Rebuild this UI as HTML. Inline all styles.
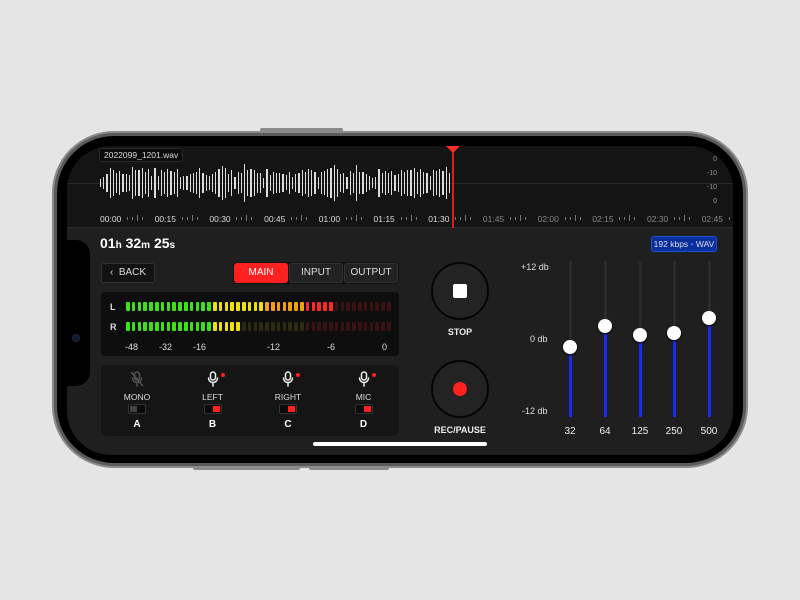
<!DOCTYPE html>
<html><head><meta charset="utf-8">
<style>
*{margin:0;padding:0;box-sizing:border-box}
body{width:800px;height:600px;background:#e5e5e5;position:relative;overflow:hidden;font-family:"Liberation Sans",sans-serif;color:#fff}
.abs{position:absolute}
.frame{left:52px;top:131px;width:696px;height:337px;border-radius:62px;background:#5a5a5a;border:2px solid #8a8a8a}
.bezel{left:57px;top:136px;width:686px;height:327px;border-radius:57px;background:#000}
.screen{left:67px;top:146px;width:666px;height:309px;border-radius:44px;background:#1f1f1f;overflow:hidden}
.top{left:0;top:0;width:666px;height:82px;background:#141414;border-bottom:1px solid #2c2c2c}
.lbl{font-size:9px;color:#ddd}
.btn{background:#121212;border:1px solid #333;border-radius:3px;font-size:10px;text-align:center;line-height:18px;color:#ddd}
.cl{font-size:9px;color:#eee;text-align:center;width:80px;font-weight:bold}
</style></head><body>
<div class="abs" style="left:260px;top:128px;width:83px;height:4px;background:#8a8a8a;border-radius:2px"></div>
<div class="abs" style="left:193px;top:466px;width:107px;height:4px;background:#8a8a8a;border-radius:2px"></div>
<div class="abs" style="left:309px;top:466px;width:80px;height:4px;background:#8a8a8a;border-radius:2px"></div>
<div class="abs frame"></div>
<div class="abs bezel"></div>
<div class="abs screen">
 <div class="abs top">
  <div class="abs" style="left:32px;top:2px;height:14px;padding:0 4px;background:#0c0c0c;border:1px solid #2a2a2a;border-radius:3px;font-size:8.5px;line-height:12px;color:#ddd">2022099_1201.wav</div>
  <div class="abs" style="left:0;top:37px;width:666px;height:1px;background:#2a2a2a"></div>
  <div id="wave" class="abs" style="left:0;top:0;width:666px;height:82px"></div>
  <div class="abs" style="right:16px;top:10px;font-size:7px;color:#999;text-align:right;line-height:7px">0<br><br>-10<br><br>-10<br><br>0</div>
  <div id="tl" class="abs" style="left:0;top:68px;width:666px;height:10px;font-size:8.5px;color:#bbb"></div>
  <div class="abs" style="left:385px;top:0;width:1.5px;height:82px;background:#d81e1e"></div>
  <div class="abs" style="left:379px;top:0;width:0;height:0;border-left:7px solid transparent;border-right:7px solid transparent;border-top:7px solid #ff2a2a"></div>
 </div>
 <div class="abs" style="left:0;top:94px;width:23px;height:146px;background:#000;border-radius:0 14px 14px 0"></div>
 <div class="abs" style="left:5px;top:188px;width:8px;height:8px;border-radius:50%;background:#0d1a33;border:1px solid #223"></div>
 <div class="abs" style="left:33px;top:89px;font-size:14px;font-weight:bold">01<span style="font-size:10px">h</span> 32<span style="font-size:10px">m</span> 25<span style="font-size:10px">s</span></div>
 <div class="abs" style="left:584px;top:90px;width:66px;height:16px;background:#0b2f9a;border:1px solid #1e50d8;border-radius:3px;font-size:8.5px;line-height:14px;text-align:center;color:#dde">192 kbps <span style="color:#3a6cff">•</span> WAV</div>
 <div class="abs btn" style="left:34px;top:117px;width:54px;height:20px">‹&nbsp; BACK</div>
 <div class="abs" style="left:166px;top:116px;width:166px;height:22px;background:#111;border-radius:4px"></div>
 <div class="abs btn" style="left:167px;top:117px;width:54px;height:20px;background:#ff2020;border-color:#ff2020;color:#fff">MAIN</div>
 <div class="abs btn" style="left:222px;top:117px;width:54px;height:20px;background:#222">INPUT</div>
 <div class="abs btn" style="left:277px;top:117px;width:54px;height:20px;background:#222">OUTPUT</div>
 <div class="abs" style="left:34px;top:146px;width:298px;height:64px;background:#0e0e0e;border-radius:4px">
  <div class="abs lbl" style="left:9px;top:10px;font-weight:bold">L</div>
  <div class="abs lbl" style="left:9px;top:30px;font-weight:bold">R</div>
  <div id="mL" class="abs" style="left:25px;top:10px;height:9px;width:270px"></div>
  <div id="mR" class="abs" style="left:25px;top:30px;height:9px;width:270px"></div>
  <div class="abs lbl" style="left:24px;top:50px">-48</div>
  <div class="abs lbl" style="left:58px;top:50px">-32</div>
  <div class="abs lbl" style="left:92px;top:50px">-16</div>
  <div class="abs lbl" style="left:166px;top:50px">-12</div>
  <div class="abs lbl" style="left:226px;top:50px">-6</div>
  <div class="abs lbl" style="left:281px;top:50px">0</div>
 </div>
 <div class="abs" style="left:34px;top:219px;width:298px;height:71px;background:#151515;border-radius:6px" id="ch"></div>
 <div class="abs" style="left:364px;top:116px;width:58px;height:58px;border-radius:50%;background:#232323;border:2px solid #050505"><div class="abs" style="left:20px;top:20px;width:14px;height:14px;background:#fff;border-radius:2px"></div></div>
 <div class="abs cl" style="left:353px;top:181px">STOP</div>
 <div class="abs" style="left:364px;top:214px;width:58px;height:58px;border-radius:50%;background:#232323;border:2px solid #050505"><div class="abs" style="left:20px;top:20px;width:14px;height:14px;background:#ff2020;border-radius:50%"></div></div>
 <div class="abs cl" style="left:353px;top:279px">REC/PAUSE</div>
 <div class="abs" style="left:246px;top:296px;width:174px;height:4px;background:#fff;border-radius:2px"></div>
 <div class="abs" style="left:454px;top:116px;font-size:9px;color:#ddd">+12 db</div>
 <div class="abs" style="left:463px;top:188px;font-size:9px;color:#ddd">0 db</div>
 <div class="abs" style="left:455px;top:260px;font-size:9px;color:#ddd">-12 db</div>
 <div id="eq"></div>
</div>
<script>
var w=document.getElementById('wave'),h='';
for(var x=33,i=0;x<385;x+=3.2,i++){var a=4+6*Math.abs(Math.sin(i*0.37))+6*Math.abs(Math.sin(i*1.7+1))*Math.abs(Math.sin(i*0.11));if(i%7==3)a+=5;h+='<div class="abs" style="left:'+x+'px;top:'+(37-a)+'px;width:1.2px;height:'+(2*a)+'px;background:#ddd"></div>';}
w.innerHTML=h;
var t=['00:00','00:15','00:30','00:45','01:00','01:15','01:30','01:45','02:00','02:15','02:30','02:45'],s='';
for(var k=0;k<12;k++){var lx=33+k*54.7;s+='<span class="abs" style="left:'+lx+'px;color:'+(k<7?'#ddd':'#888')+'">'+t[k]+'</span>';for(var j=0;j<4;j++)s+='<span class="abs" style="left:'+(lx+27+j*5)+'px;top:'+(j==2?1:3)+'px;width:1px;height:'+(j==2?6:3)+'px;background:#777"></span>';}
document.getElementById('tl').innerHTML=s;
function meter(id,lit){var e=document.getElementById(id),o='';for(var n=0;n<46;n++){var c;var on=n<lit;if(n<15)c=on?'#3ee01a':'#123';else if(n<24)c=on?'#f0e010':'#3a3510';else if(n<31)c=on?'#f0a010':'#3a2a10';else c=on?'#ff2828':'#3a1212';if(id=='mR'&&!on&&n<31)c='#2e2a10';o+='<div class="abs" style="left:'+(n*5.8)+'px;top:0;width:3.6px;height:9px;border-radius:1px;background:'+c+'"></div>';}e.innerHTML=o;}
meter('mL',36);meter('mR',20);
var ch=document.getElementById('ch'),names=['MONO','LEFT','RIGHT','MIC'],L=['A','B','C','D'],o='';
for(var q=0;q<4;q++){var cx=36+q*75.5;var on=q>0;var col=on?'#eee':'#555';
o+='<svg class="abs" style="left:'+(cx-7)+'px;top:6px" width="14" height="16" viewBox="0 0 14 16" fill="none" stroke="'+col+'" stroke-width="1.5" stroke-linecap="round"><rect x="4.5" y="1" width="5" height="8" rx="2.5"/><path d="M2.5 7a4.5 4.5 0 0 0 9 0M7 11.5V15"/>'+(on?'':'<path d="M1.5 1.5l11 13"/>')+'</svg>';
if(on)o+='<div class="abs" style="left:'+(cx+8)+'px;top:8px;width:4px;height:4px;border-radius:50%;background:#ff2020"></div>';
o+='<div class="abs" style="left:'+(cx-30)+'px;top:27px;width:60px;text-align:center;font-size:8.5px;color:#ddd">'+names[q]+'</div>';
o+='<div class="abs" style="left:'+(cx-9)+'px;top:39px;width:18px;height:10px;background:#0a0a0a;border:1px solid #333;border-radius:2px"><div class="abs" style="left:'+(on?8:1)+'px;top:1px;width:7px;height:6px;background:'+(on?'#ff2020':'#444')+'"></div></div>';
o+='<div class="abs" style="left:'+(cx-10)+'px;top:54px;width:20px;text-align:center;font-size:10px;font-weight:bold">'+L[q]+'</div>';}
ch.innerHTML=o;
var xs=[503,538,573,607,642],ky=[201,180,189,187,172],fr=['32','64','125','250','500'],e='';
for(var z=0;z<5;z++){e+='<div class="abs" style="left:'+(xs[z]-1.5)+'px;top:115px;width:3px;height:156px;background:#2a2a2a"></div>';
e+='<div class="abs" style="left:'+(xs[z]-1.5)+'px;top:'+ky[z]+'px;width:3px;height:'+(271-ky[z])+'px;background:#1a2cf0"></div>';
e+='<div class="abs" style="left:'+(xs[z]-7)+'px;top:'+(ky[z]-7)+'px;width:14px;height:14px;border-radius:50%;background:#fff;box-shadow:0 1px 2px #000"></div>';
e+='<div class="abs" style="left:'+(xs[z]-15)+'px;top:280px;width:30px;text-align:center;font-size:10px;color:#eee">'+fr[z]+'</div>';}
document.getElementById('eq').innerHTML=e;
</script>
</body></html>
